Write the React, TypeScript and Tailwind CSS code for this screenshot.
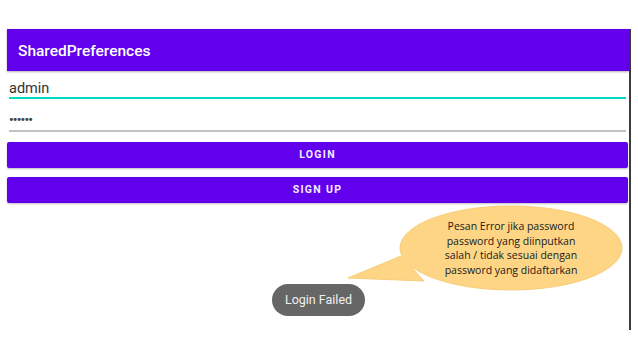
export default function App() {
  return (
    <div className="relative h-[359px] w-[638px] overflow-hidden bg-white font-['Roboto',sans-serif]">
      <div className="ml-[7px] mt-[29px] flex h-[301px] w-[624px] flex-col border-r-[2px] border-[#3c3c3c]">
        {/* app bar */}
        <div className="flex h-[42px] items-center bg-[#6200EE] pl-[11px] pt-[4px] shadow-[0_1px_2px_rgba(0,0,0,0.3)]">
          <span className="text-[15.5px] font-medium text-white">SharedPreferences</span>
        </div>

        {/* username */}
        <div className="mx-[2px] mr-[3px] flex h-[28px] flex-col justify-end">
          <div className="text-[14.5px] leading-[16px] text-[#333]">admin</div>
          <div className="h-[2px] bg-[#03DAC5]" />
        </div>

        {/* password */}
        <div className="mx-[2px] mr-[3px] flex h-[33px] flex-col justify-end">
          <div className="text-[13px] font-bold leading-[18px] tracking-[-0.8px] text-[#444]">••••••</div>
          <div className="mt-[1px] h-[2px] bg-[#c2c2c2]" />
        </div>

        <div className="mt-[10px] flex flex-col gap-[9px] pr-[1px]">
          <button className="h-[26px] rounded-[2px] bg-[#6200EE] text-[10.5px] font-bold tracking-[1.3px] text-[#f3ecff] shadow-[0_1px_2px_rgba(0,0,0,0.25)]">
            LOGIN
          </button>
          <button className="h-[26px] rounded-[2px] bg-[#6200EE] text-[10.5px] font-bold tracking-[1.3px] text-[#f3ecff] shadow-[0_1px_2px_rgba(0,0,0,0.25)]">
            SIGN UP
          </button>
        </div>
      </div>

      {/* callout */}
      <svg className="absolute left-0 top-0" width="638" height="359" viewBox="0 0 638 359">
        <path d="M 401 256 L 348 278 L 424 281 Z" fill="#FDD585" stroke="#F9CD78" strokeWidth="1" />
        <ellipse cx="511" cy="248" rx="111" ry="42" fill="#FDD585" stroke="#F9CD78" strokeWidth="1" />
        <path d="M 403 257 L 352 277 L 422 279 Z" fill="#FDD585" />
      </svg>
      <div className="absolute left-[411px] top-[219px] w-[200px] text-center font-['Open_Sans',sans-serif] text-[10.5px] leading-[14.5px] text-[#1a1a1a]">
        Pesan Error jika password
        <br />
        password yang diinputkan
        <br />
        salah / tidak sesuai dengan
        <br />
        password yang didaftarkan
      </div>

      {/* toast */}
      <div className="absolute left-[272px] top-[284px] flex h-[32px] w-[93px] items-center justify-center rounded-full bg-[#666666]">
        <span className="text-[12.5px] text-[#f0f0f0]">Login Failed</span>
      </div>
    </div>
  )
}
